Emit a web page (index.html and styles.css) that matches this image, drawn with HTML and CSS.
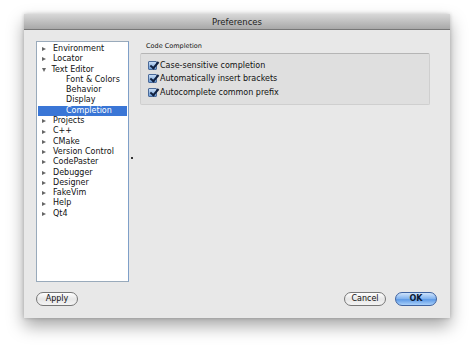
FILE: index.html
```html
<!DOCTYPE html>
<html lang="en">
<head>
<meta charset="UTF-8">
<title>Preferences</title>
<link rel="stylesheet" href="styles.css">
</head>
<body>

<div class="window">
    <div class="titlebar">Preferences</div>

    <div class="content">
        <!-- category tree -->
        <ul class="tree">
            <li class="node"><span class="arrow"></span>Environment</li>
            <li class="node"><span class="arrow"></span>Locator</li>
            <li class="node"><span class="arrow open"></span>Text Editor</li>
            <li class="child">Font &amp; Colors</li>
            <li class="child">Behavior</li>
            <li class="child">Display</li>
            <li class="child selected">Completion</li>
            <li class="node"><span class="arrow"></span>Projects</li>
            <li class="node"><span class="arrow"></span>C++</li>
            <li class="node"><span class="arrow"></span>CMake</li>
            <li class="node"><span class="arrow"></span>Version Control</li>
            <li class="node"><span class="arrow"></span>CodePaster</li>
            <li class="node"><span class="arrow"></span>Debugger</li>
            <li class="node"><span class="arrow"></span>Designer</li>
            <li class="node"><span class="arrow"></span>FakeVim</li>
            <li class="node"><span class="arrow"></span>Help</li>
            <li class="node"><span class="arrow"></span>Qt4</li>
        </ul>

        <div class="splitter"></div>

        <!-- settings page -->
        <div class="page">
            <div class="group-title">Code Completion</div>
            <div class="group">
                <label class="check"><span class="box"></span>Case-sensitive completion</label>
                <label class="check"><span class="box"></span>Automatically insert brackets</label>
                <label class="check"><span class="box"></span>Autocomplete common prefix</label>
            </div>
        </div>
    </div>

    <div class="footer">
        <button class="btn">Apply</button>
        <div class="right">
            <button class="btn">Cancel</button>
            <button class="btn default">OK</button>
        </div>
    </div>
</div>

</body>
</html>
```

FILE: styles.css
```css
/* ===== PAGE ===== */
*{box-sizing:border-box;margin:0;padding:0;}
body{
    width:474px;
    height:352px;
    background:#fff;
    font-family:"DejaVu Sans",sans-serif;
    color:#111;
    overflow:hidden;
}

/* ===== WINDOW ===== */
.window{
    margin:14px 0 0 24px;
    width:426px;
    height:304px;
    display:flex;
    flex-direction:column;
    background:#e8e8e8;
    box-shadow:0 8px 16px rgba(0,0,0,.35),0 0 4px rgba(0,0,0,.2);
}
.titlebar{
    height:16px;
    line-height:16px;
    text-align:center;
    font-size:8.5px;
    color:#222;
    background:linear-gradient(#d8d8d8,#a8a8a8);
    border-bottom:1px solid #777;
}

/* ===== CONTENT ===== */
.content{
    flex:1;
    display:flex;
    padding:11px 0 0 12px;
}

/* tree */
.tree{
    list-style:none;
    width:93px;
    height:241px;
    background:#fff;
    border:1px solid #9ab;
    border-right-color:#7f9fc8;
    padding:2px 1px 1px;
    font-size:8px;
}
.tree li{
    height:10.3px;
    line-height:10.3px;
    white-space:nowrap;
    display:flex;
    align-items:center;
}
.node{padding-left:4px;}
.child{padding-left:28px;}
.selected{
    background:#3a76d6;
    color:#fff;
}
.arrow{
    width:0;
    height:0;
    margin-right:7px;
    border-style:solid;
    border-width:2.5px 0 2.5px 4px;
    border-color:transparent transparent transparent #666;
}
.arrow.open{
    border-width:4px 2.5px 0 2.5px;
    border-color:#666 transparent transparent transparent;
    margin-right:5.5px;
}

/* splitter handle */
.splitter{
    width:11px;
    display:flex;
    align-items:center;
    justify-content:center;
}
.splitter::before{
    content:'';
    width:2px;
    height:2px;
    margin:-8px 0 0 -6px;
    background:#333;
}

/* page */
.page{
    width:290px;
}
.group-title{
    font-size:6.5px;
    padding-left:6px;
    height:11px;
    line-height:11px;
}
.group{
    margin-top:1px;
    height:52px;
    background:#dfdfdf;
    border:1px solid #cfcfcf;
    border-top-color:#b5b5b5;
    border-radius:2px;
    padding:6px 0 0 7px;
    display:flex;
    flex-direction:column;
    gap:3.5px;
}
.check{
    display:flex;
    align-items:center;
    font-size:8px;
    height:10px;
}
.box{
    position:relative;
    width:9px;
    height:9px;
    margin-right:3px;
    border:1px solid #4a6a9a;
    border-radius:1px;
    background:linear-gradient(#c8dcf4,#6f9fd8);
}
.box::after{
    content:'';
    position:absolute;
    left:2.5px;
    top:-2px;
    width:3px;
    height:7px;
    border:solid #102040;
    border-width:0 2px 2px 0;
    transform:rotate(40deg);
}

/* ===== FOOTER ===== */
.footer{
    height:36px;
    display:flex;
    align-items:center;
    justify-content:space-between;
    padding:0 13px 3px 12px;
}
.right{
    display:flex;
    gap:9px;
}
.btn{
    width:42px;
    height:14px;
    border:1px solid #777;
    border-radius:7px;
    background:linear-gradient(#fff,#e6e6e6 50%,#f4f4f4);
    font-family:"DejaVu Sans",sans-serif;
    font-size:8px;
    color:#111;
}
.btn.default{
    border-color:#3f63a0;
    background:linear-gradient(#cfe3fb,#7eb0ee 50%,#5e9ae6 55%,#a9d0fa);
    font-weight:bold;
    color:#0c1a33;
}
```
